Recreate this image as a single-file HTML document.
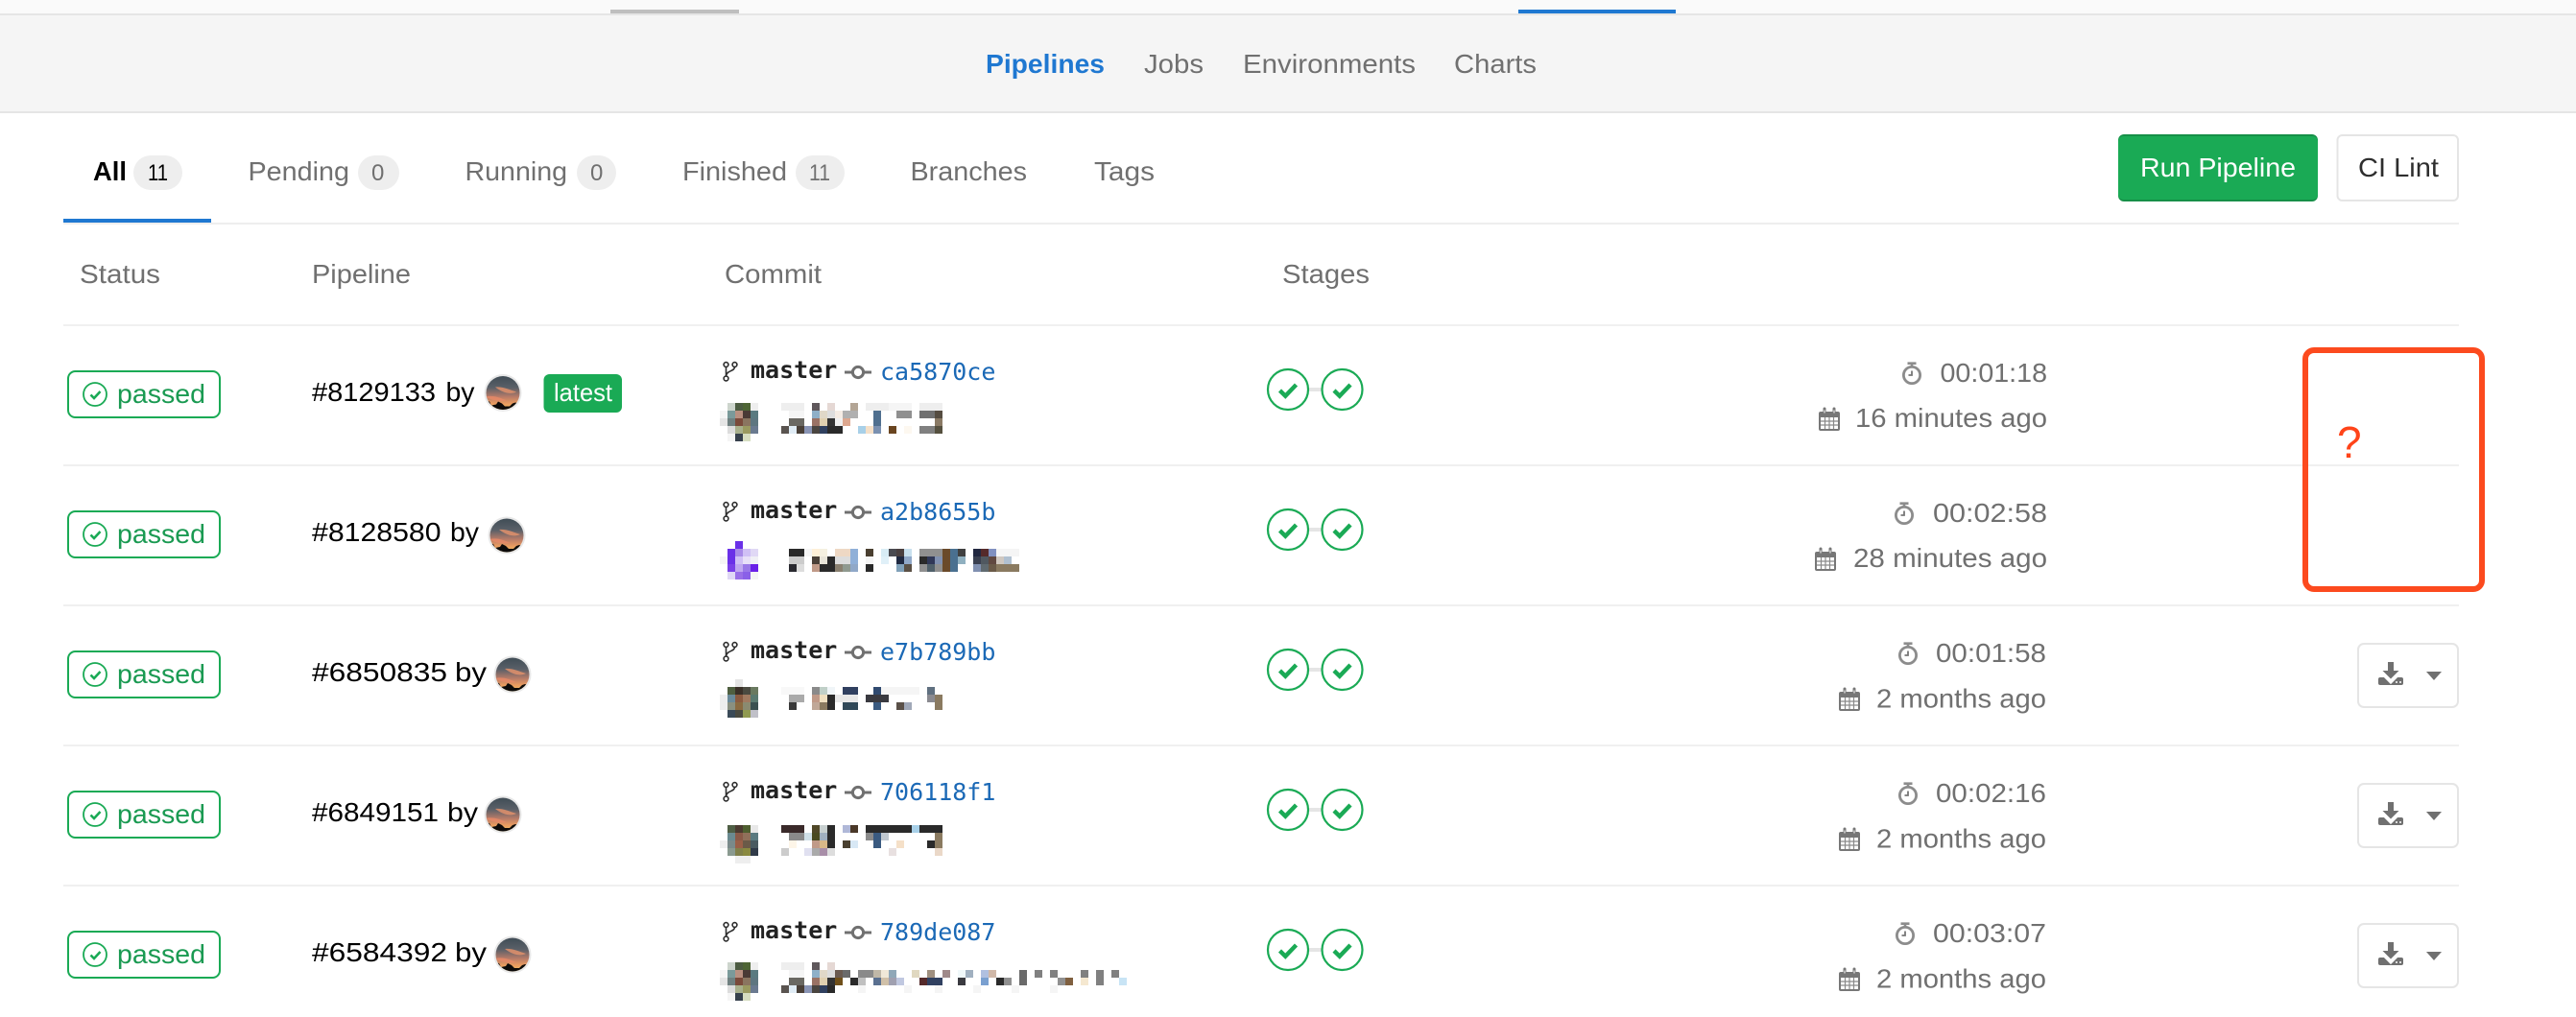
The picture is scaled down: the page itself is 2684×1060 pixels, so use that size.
<!DOCTYPE html>
<html>
<head>
<meta charset="utf-8">
<title>Pipelines</title>
<style>
html,body{margin:0;padding:0;background:#fff;width:2684px;height:1060px;overflow:hidden}
svg{display:block}
text{font-family:"Liberation Sans",Arial,sans-serif;font-size:28px;fill:#707070}
.b{font-weight:bold}
.d{fill:#000}
.n{font-size:24px}
.mono{font-family:"DejaVu Sans Mono","Liberation Mono",monospace;font-size:25px}
.m{font-weight:bold;fill:#222}
.h{fill:#1b69b6}
.p{fill:#1a9a52}
.px{fill:none;stroke-width:1;shape-rendering:crispEdges}
</style>
</head>
<body>
<svg width="2684" height="1060" viewBox="0 0 2684 1060" xmlns="http://www.w3.org/2000/svg">
<defs>
  <linearGradient id="sky" x1="0" y1="0" x2="0" y2="1">
    <stop offset="0" stop-color="#3f4c55"/>
    <stop offset=".35" stop-color="#5a6068"/>
    <stop offset=".62" stop-color="#b97c68"/>
    <stop offset=".8" stop-color="#e89a60"/>
    <stop offset="1" stop-color="#f0c060"/>
  </linearGradient>
  <clipPath id="ac"><circle r="17.500"/></clipPath>
  <g id="av">
    <circle r="19.500" fill="#e8e8e8"/>
    <g clip-path="url(#ac)">
      <rect x="-18" y="-18" width="36" height="36" fill="url(#sky)"/>
      <path d="M-8-6C-1-7 8-3 14-1 8 2 0 0-8-6z" fill="#e0906c" opacity=".85"/>
      <path d="M-18 4C-10 2-3 5 4 8-4 9-12 8-18 4z" fill="#e88a68" opacity=".8"/>
      <path d="M-18 8l4 1 2 4 5-1 2-3 4 2 3 3 5 0 3-3 3-1 3 1 4 2V20H-18z" fill="#0d0b0a"/>
    </g>
  </g>
  <g id="ck">
    <circle r="21" fill="#fff" stroke="#1aaa55" stroke-width="2.200"/>
    <path d="M-8.500 1L-2.700 6.700 8.500-5" fill="none" stroke="#1aaa55" stroke-width="4.400"/>
  </g>
  <g id="stg">
    <rect x="0" y="-2" width="60" height="4" fill="#e5e5e5"/>
    <use href="#ck" x="0" y="0"/>
    <use href="#ck" x="56.500" y="0"/>
  </g>
  <g id="pass">
    <rect x="71" y="387" width="158" height="48" rx="7.500" fill="#fff" stroke="#1aaa55" stroke-width="2"/>
    <circle cx="99" cy="411" r="12" fill="none" stroke="#1aaa55" stroke-width="1.800"/>
    <path d="M94.500 411.500L98 415 104.500 408" fill="none" stroke="#1aaa55" stroke-width="2.600"/>
    <text class="p" x="122" y="420" textLength="92" lengthAdjust="spacingAndGlyphs">passed</text>
  </g>
  <g id="br" fill="none" stroke="#2e2e2e" stroke-width="1.600">
    <circle cx="756.500" cy="380" r="2.400"/><circle cx="765.500" cy="380" r="2.400"/><circle cx="756.500" cy="394.500" r="2.400"/>
    <path d="M756.500 382.500V392M765.500 382.500C765.500 387 757.500 386 756.500 391.500"/>
  </g>
  <g id="cm" fill="none" stroke="#707070" stroke-width="3">
    <path d="M880 388h8M900 388h8"/><circle cx="894" cy="388" r="5.600"/>
  </g>
  <g id="sw" fill="none" stroke="#8c8c8c">
    <circle r="8.600" stroke-width="2.800"/>
    <path d="M-4.500-12.300h9M0-11.500v3" stroke-width="2.600"/>
    <path d="M0-4.500v4.500h-3.500" stroke-width="1.800" stroke="#777"/>
  </g>
  <g id="cal">
    <rect x="0" y="4" width="22" height="20" rx="2" fill="#777"/>
    <rect x="2" y="10" width="18" height="12" fill="#fff"/>
    <path d="M6.500 10v12M11 10v12M15.500 10v12M2 14h18M2 18h18" stroke="#8a8a8a" stroke-width="1.200"/>
    <path d="M6 1v6M16 1v6" stroke="#777" stroke-width="3" stroke-linecap="round"/>
    <path d="M6 2.500v3M16 2.500v3" stroke="#fff" stroke-width="1"/>
  </g>
  <g id="dl">
    <rect x="2457" y="671" width="104" height="66" rx="6" fill="#fff" stroke="#e5e5e5" stroke-width="2"/>
    <rect x="2478" y="706" width="26" height="8" rx="2" fill="#707070"/>
    <path d="M2482 702L2491 711 2500 702z" fill="#fff" stroke="#fff" stroke-width="3"/>
    <path d="M2488 690h6v9h5.500L2491 707.500 2482.500 699h5.500z" fill="#707070"/>
    <circle cx="2497" cy="711" r="1" fill="#fff"/><circle cx="2501" cy="711" r="1" fill="#fff"/>
    <path d="M2528 700h16l-8 9z" fill="#707070"/>
  </g>
  <g id="a1" class="px">
    <path stroke="#cdd5cd" d="M1 .5h1"/><path stroke="#4c5c42" d="M2 .5h1"/><path stroke="#4e6535" d="M3 .5h1"/><path stroke="#eeeeee" d="M4 .5h1"/>
    <path stroke="#f5f5f5" d="M0 1.500h1"/><path stroke="#7a9a9a" d="M1 1.500h1"/><path stroke="#b99080" d="M2 1.500h1"/><path stroke="#4a3a35" d="M3 1.500h1"/><path stroke="#5a7a80" d="M4 1.500h1"/>
    <path stroke="#e5e5e5" d="M0 2.500h1"/><path stroke="#6f8080" d="M1 2.500h1"/><path stroke="#7a4a3a" d="M2 2.500h1"/><path stroke="#8a7560" d="M3 2.500h1"/><path stroke="#5e7680" d="M4 2.500h1"/>
    <path stroke="#dcdcdc" d="M1 3.500h1"/><path stroke="#a8b08c" d="M2 3.500h1"/><path stroke="#9a9a60" d="M3 3.500h1"/><path stroke="#6a7a90" d="M4 3.500h1"/>
    <path stroke="#f5f5f5" d="M1 4.500h1"/><path stroke="#36404c" d="M2 4.500h1"/><path stroke="#d6ddc0" d="M3 4.500h1"/>
  </g>
</defs>

<!-- top -->
<rect x="0" y="0" width="2684" height="14" fill="#fafafa"/>
<rect x="636" y="10" width="134" height="4" fill="#bfbfbf"/>
<rect x="1582" y="10" width="164" height="4" fill="#1f78d1"/>
<rect x="0" y="14" width="2684" height="2" fill="#e5e5e5"/>
<rect x="0" y="16" width="2684" height="100" fill="#f5f5f5"/>
<rect x="0" y="116" width="2684" height="2" fill="#e5e5e5"/>
<text class="b" style="fill:#1f78d1" x="1027" y="76" textLength="124" lengthAdjust="spacingAndGlyphs">Pipelines</text>
<text x="1192" y="76" textLength="62" lengthAdjust="spacingAndGlyphs">Jobs</text>
<text x="1295" y="76" textLength="180" lengthAdjust="spacingAndGlyphs">Environments</text>
<text x="1515" y="76" textLength="86" lengthAdjust="spacingAndGlyphs">Charts</text>

<!-- tabs -->
<rect x="66" y="232" width="2496" height="2" fill="#eeeeee"/>
<rect x="66" y="228" width="154" height="4" fill="#1f78d1"/>
<text class="b d" x="97" y="188" textLength="35" lengthAdjust="spacingAndGlyphs">All</text>
<rect x="139" y="162" width="51" height="36" rx="18" fill="#eeeeee"/>
<text class="n d" x="154" y="188" textLength="21" lengthAdjust="spacingAndGlyphs">11</text>
<text x="258.500" y="188" textLength="105.500" lengthAdjust="spacingAndGlyphs">Pending</text>
<rect x="373" y="162" width="43" height="36" rx="18" fill="#eeeeee"/>
<text class="n" x="387" y="188">0</text>
<text x="484.500" y="188" textLength="106.500" lengthAdjust="spacingAndGlyphs">Running</text>
<rect x="601" y="162" width="41" height="36" rx="18" fill="#eeeeee"/>
<text class="n" x="615" y="188">0</text>
<text x="711" y="188" textLength="109" lengthAdjust="spacingAndGlyphs">Finished</text>
<rect x="829" y="162" width="51" height="36" rx="18" fill="#eeeeee"/>
<text class="n" x="843" y="188" textLength="22" lengthAdjust="spacingAndGlyphs">11</text>
<text x="948.500" y="188" textLength="121.500" lengthAdjust="spacingAndGlyphs">Branches</text>
<text x="1140" y="188" textLength="63" lengthAdjust="spacingAndGlyphs">Tags</text>

<!-- buttons -->
<rect x="2207" y="140" width="208" height="70" rx="6" fill="#168f48"/>
<rect x="2207" y="142" width="208" height="66" rx="5" fill="#1aaa55"/>
<text style="fill:#fff" x="2230" y="184" textLength="162" lengthAdjust="spacingAndGlyphs">Run Pipeline</text>
<rect x="2435.500" y="141" width="125.500" height="68" rx="5" fill="#fff" stroke="#e5e5e5" stroke-width="2"/>
<text style="fill:#2e2e2e" x="2457" y="184" textLength="84" lengthAdjust="spacingAndGlyphs">CI Lint</text>

<!-- table head -->
<text x="83" y="295" textLength="84" lengthAdjust="spacingAndGlyphs">Status</text>
<text x="325" y="295" textLength="103" lengthAdjust="spacingAndGlyphs">Pipeline</text>
<text x="755" y="295" textLength="101" lengthAdjust="spacingAndGlyphs">Commit</text>
<text x="1336" y="295" textLength="91" lengthAdjust="spacingAndGlyphs">Stages</text>
<rect x="66" y="338" width="2496" height="2" fill="#f0f0f0"/>
<rect x="66" y="484" width="2496" height="2" fill="#f0f0f0"/>
<rect x="66" y="630" width="2496" height="2" fill="#f0f0f0"/>
<rect x="66" y="776" width="2496" height="2" fill="#f0f0f0"/>
<rect x="66" y="922" width="2496" height="2" fill="#f0f0f0"/>

<!-- ROW 1 -->
<use href="#pass"/>
<text class="d" x="325" y="418" textLength="129" lengthAdjust="spacingAndGlyphs">#8129133</text>
<text class="d" x="464.500" y="418" textLength="30" lengthAdjust="spacingAndGlyphs">by</text>
<use href="#av" x="524" y="409.500"/>
<rect x="566.500" y="390" width="81.500" height="40" rx="6" fill="#1aaa55"/>
<text style="fill:#fff;font-size:26px" x="577" y="418" textLength="61" lengthAdjust="spacingAndGlyphs">latest</text>
<use href="#br"/>
<text class="mono m" x="782" y="394">master</text>
<use href="#cm"/>
<text class="mono h" x="917" y="396">ca5870ce</text>
<use href="#stg" x="1342" y="406"/>
<use href="#sw" x="1992" y="391"/>
<text x="2021.500" y="398" textLength="111.500" lengthAdjust="spacingAndGlyphs">00:01:18</text>
<use href="#cal" x="1895" y="425"/>
<text x="1933" y="445" textLength="200" lengthAdjust="spacingAndGlyphs">16 minutes ago</text>
<use href="#a1" transform="translate(750,420) scale(8)"/>
<g class="px" transform="translate(814,420) scale(8)">
<path stroke="#eeeeee" d="M0 .5h3M11 .5h3M18 .5h3"/><path stroke="#5f585c" d="M4 .5h1"/><path stroke="#e5d8d4" d="M6 .5h1"/><path stroke="#b3a595" d="M9 .5h1"/><path stroke="#f5f5f5" d="M14 .5h3"/>
<path stroke="#f5f5f5" d="M1 1.500h2"/><path stroke="#8fb0c8" d="M4 1.500h1"/><path stroke="#e0d8c8" d="M5 1.500h1"/><path stroke="#dddddd" d="M6 1.500h1"/><path stroke="#f5ece4" d="M7 1.500h1"/><path stroke="#b0b0b0" d="M8 1.500h2"/><path stroke="#4f6f8f" d="M12 1.500h1"/><path stroke="#909090" d="M15 1.500h2"/><path stroke="#707070" d="M18 1.500h2"/><path stroke="#554c40" d="M20 1.500h1"/>
<path stroke="#6a6862" d="M1 2.500h2"/><path stroke="#9a7265" d="M4 2.500h1"/><path stroke="#e0d0b0" d="M5 2.500h1"/><path stroke="#333333" d="M6 2.500h1"/><path stroke="#f0f0f0" d="M7 2.500h1"/><path stroke="#dda890" d="M8 2.500h1"/><path stroke="#4f6f8f" d="M12 2.500h1"/><path stroke="#8a7a65" d="M20 2.500h1"/>
<path stroke="#5a5450" d="M0 3.500h1"/><path stroke="#e0ecf5" d="M1 3.500h1"/><path stroke="#4a4038" d="M2 3.500h1"/><path stroke="#8a95b5" d="M3 3.500h1"/><path stroke="#4a4540" d="M4 3.500h1"/><path stroke="#30405f" d="M5 3.500h1"/><path stroke="#2a2a2a" d="M6 3.500h2"/><path stroke="#a8d0e8" d="M10 3.500h1"/><path stroke="#f5e0c8" d="M11 3.500h1"/><path stroke="#7a90b0" d="M12 3.500h1"/><path stroke="#6a4520" d="M14 3.500h1"/><path stroke="#fdf8f0" d="M16 3.500h1"/><path stroke="#808080" d="M18 3.500h2"/><path stroke="#55503f" d="M20 3.500h1"/>
</g>

<!-- ROW 2 -->
<use href="#pass" y="146"/>
<text class="d" x="325" y="564" textLength="134.500" lengthAdjust="spacingAndGlyphs">#8128580</text>
<text class="d" x="469" y="564" textLength="30" lengthAdjust="spacingAndGlyphs">by</text>
<use href="#av" x="528" y="558"/>
<use href="#br" y="146"/>
<text class="mono m" x="782" y="540">master</text>
<use href="#cm" y="146"/>
<text class="mono h" x="917" y="542">a2b8655b</text>
<use href="#stg" x="1342" y="552"/>
<use href="#sw" x="1984" y="537"/>
<text x="2014" y="544" textLength="119" lengthAdjust="spacingAndGlyphs">00:02:58</text>
<use href="#cal" x="1891" y="571"/>
<text x="1931" y="591" textLength="202" lengthAdjust="spacingAndGlyphs">28 minutes ago</text>
<g class="px" transform="translate(750,564) scale(8)">
<path stroke="#6a30e8" d="M2 .5h1M1 1.500h1M1 2.500h1"/><path stroke="#a88ae8" d="M2 1.500h1"/><path stroke="#d0c0f5" d="M3 1.500h1M2 2.500h1"/><path stroke="#e0d8f5" d="M4 1.500h1M1 4.500h1"/>
<path stroke="#f5f5f5" d="M0 2.500h1M4 4.500h1"/><path stroke="#e8e0f8" d="M3 2.500h1"/><path stroke="#f0f0f5" d="M4 2.500h1"/>
<path stroke="#7a40e8" d="M1 3.500h1"/><path stroke="#c0a8f0" d="M2 3.500h1"/><path stroke="#9a78e8" d="M3 3.500h1"/><path stroke="#6a20e8" d="M4 3.500h1"/>
<path stroke="#9a70e8" d="M2 4.500h1"/><path stroke="#8a60e8" d="M3 4.500h1"/>
</g>
<g class="px" transform="translate(814,572) scale(8)">
<path stroke="#2a2a2a" d="M1 .5h2M6 1.500h1M18 1.500h1M5 2.500h2M11 2.500h1"/><path stroke="#f5f5f5" d="M3 .5h1M11 1.500h1M28 .5h3"/><path stroke="#fef0d8" d="M4 .5h1"/><path stroke="#f5f0e0" d="M5 .5h1"/><path stroke="#eed8c4" d="M7 .5h2"/><path stroke="#90b0d8" d="M9 .5h1M9 1.500h1"/><path stroke="#4a3f30" d="M11 .5h1"/><path stroke="#d8ecf5" d="M13 .5h1"/><path stroke="#4a4a50" d="M14 .5h1"/><path stroke="#4a4040" d="M15 .5h1"/><path stroke="#c8e0ee" d="M16 .5h1"/><path stroke="#909090" d="M18 .5h3M18 2.500h1M20 2.500h1"/><path stroke="#6a4a2a" d="M21 .5h1M21 1.500h1M21 2.500h1"/><path stroke="#4a7090" d="M22 .5h1M22 1.500h1M22 2.500h1"/><path stroke="#404040" d="M23 .5h1"/><path stroke="#222840" d="M25 .5h1"/><path stroke="#552a2a" d="M26 .5h1"/><path stroke="#8090c0" d="M27 .5h1"/>
<path stroke="#cccccc" d="M1 1.500h2"/><path stroke="#4a4038" d="M4 1.500h1"/><path stroke="#e8e4d8" d="M5 1.500h1"/><path stroke="#dddddd" d="M7 1.500h2M2 2.500h1"/><path stroke="#e0f0f8" d="M13 1.500h1"/><path stroke="#1f2840" d="M15 1.500h1"/><path stroke="#90a8c8" d="M16 1.500h1M9 2.500h1"/><path stroke="#303858" d="M19 1.500h1"/><path stroke="#8090b0" d="M20 1.500h1M25 2.500h1"/><path stroke="#90b0c0" d="M23 1.500h1"/><path stroke="#3a4050" d="M25 1.500h1"/><path stroke="#505860" d="M26 1.500h1"/><path stroke="#604840" d="M27 1.500h1"/><path stroke="#d0c8c0" d="M28 1.500h1"/><path stroke="#b0c0d0" d="M29 1.500h1"/>
<path stroke="#2a2a30" d="M1 2.500h1"/><path stroke="#c09a88" d="M4 2.500h1"/><path stroke="#8a8070" d="M7 2.500h1"/><path stroke="#909a90" d="M8 2.500h1"/><path stroke="#80a0b8" d="M15 2.500h1"/><path stroke="#5a5045" d="M16 2.500h1"/><path stroke="#50606a" d="M19 2.500h1"/><path stroke="#606a70" d="M26 2.500h1"/><path stroke="#6a5a48" d="M27 2.500h1"/><path stroke="#8a7a60" d="M28 2.500h3"/>
</g>

<!-- ROW 3 -->
<use href="#pass" y="292"/>
<text class="d" x="325" y="710" textLength="141" lengthAdjust="spacingAndGlyphs">#6850835</text>
<text class="d" x="474" y="710" textLength="33" lengthAdjust="spacingAndGlyphs">by</text>
<use href="#av" x="534" y="703"/>
<use href="#br" y="292"/>
<text class="mono m" x="782" y="686">master</text>
<use href="#cm" y="292"/>
<text class="mono h" x="917" y="688">e7b789bb</text>
<use href="#stg" x="1342" y="698"/>
<use href="#sw" x="1988" y="683"/>
<text x="2017" y="690" textLength="115" lengthAdjust="spacingAndGlyphs">00:01:58</text>
<use href="#cal" x="1916" y="717"/>
<text x="1955" y="737.500" textLength="177" lengthAdjust="spacingAndGlyphs">2 months ago</text>
<use href="#dl"/>
<g class="px" transform="translate(750,708) scale(8)">
<path stroke="#e5e5e5" d="M2 .5h1"/><path stroke="#4f5f40" d="M1 1.500h1"/><path stroke="#3a3028" d="M2 1.500h1"/><path stroke="#4a4a40" d="M3 1.500h1"/><path stroke="#6a7a60" d="M4 1.500h1"/>
<path stroke="#eeeeee" d="M0 2.500h1M0 3.500h1"/><path stroke="#6a8a9a" d="M1 2.500h1"/><path stroke="#8a5a40" d="M2 2.500h1"/><path stroke="#a07a60" d="M3 2.500h1"/><path stroke="#5a7a70" d="M4 2.500h1"/>
<path stroke="#8a9080" d="M1 3.500h1"/><path stroke="#8a6a40" d="M2 3.500h1"/><path stroke="#8a8a70" d="M3 3.500h1"/><path stroke="#3a5050" d="M4 3.500h1"/>
<path stroke="#3a4a58" d="M1 4.500h1"/><path stroke="#4a4a40" d="M2 4.500h1"/><path stroke="#909a50" d="M3 4.500h1"/><path stroke="#c0c0c8" d="M4 4.500h1"/>
</g>
<g class="px" transform="translate(814,716) scale(8)">
<path stroke="#f8f8f8" d="M0 .5h3"/><path stroke="#8a8a8a" d="M4 .5h1"/><path stroke="#c0d0c8" d="M5 .5h1"/><path stroke="#f0f5f8" d="M6 .5h1"/><path stroke="#304060" d="M8 .5h2"/><path stroke="#304a70" d="M12 .5h1"/><path stroke="#f5f5f5" d="M13 .5h5"/><path stroke="#607080" d="M19 .5h1"/>
<path stroke="#aaaaaa" d="M1 1.500h2"/><path stroke="#c09a88" d="M4 1.500h1"/><path stroke="#f0e0c0" d="M5 1.500h1"/><path stroke="#2a2a2a" d="M6 1.500h1M6 2.500h1"/><path stroke="#e8e8e8" d="M7 1.500h3"/><path stroke="#3a3a40" d="M11 1.500h3"/><path stroke="#8a8a90" d="M19 1.500h1"/><path stroke="#8a7a60" d="M20 1.500h1M5 2.500h1M20 2.500h1"/>
<path stroke="#3a3a3a" d="M1 2.500h1"/><path stroke="#c0a898" d="M4 2.500h1"/><path stroke="#304858" d="M8 2.500h2"/><path stroke="#3a5a80" d="M12 2.500h1"/><path stroke="#5a5048" d="M15 2.500h1"/><path stroke="#a0a8b8" d="M16 2.500h1"/>
</g>

<!-- ROW 4 -->
<use href="#pass" y="438"/>
<text class="d" x="325" y="856" textLength="132" lengthAdjust="spacingAndGlyphs">#6849151</text>
<text class="d" x="466" y="856" textLength="32" lengthAdjust="spacingAndGlyphs">by</text>
<use href="#av" x="524" y="849"/>
<use href="#br" y="438"/>
<text class="mono m" x="782" y="832">master</text>
<use href="#cm" y="438"/>
<text class="mono h" x="917" y="834">706118f1</text>
<use href="#stg" x="1342" y="844"/>
<use href="#sw" x="1988" y="829"/>
<text x="2017" y="836" textLength="115" lengthAdjust="spacingAndGlyphs">00:02:16</text>
<use href="#cal" x="1916" y="863"/>
<text x="1955" y="883.500" textLength="177" lengthAdjust="spacingAndGlyphs">2 months ago</text>
<use href="#dl" y="146"/>
<g class="px" transform="translate(750,860) scale(8)">
<path stroke="#4f5f45" d="M1 .5h1"/><path stroke="#4a3a30" d="M2 .5h1"/><path stroke="#4f5f30" d="M3 .5h1"/><path stroke="#e8e8e8" d="M4 .5h1"/>
<path stroke="#6a8a90" d="M1 1.500h1"/><path stroke="#8a5a48" d="M2 1.500h1"/><path stroke="#90705a" d="M3 1.500h1"/><path stroke="#5a7a80" d="M4 1.500h1"/>
<path stroke="#eeeeee" d="M0 2.500h1M2 4.500h2"/><path stroke="#7a8a8a" d="M1 2.500h1"/><path stroke="#9a6048" d="M2 2.500h1"/><path stroke="#6a5a48" d="M3 2.500h1"/><path stroke="#4a5a60" d="M4 2.500h1"/>
<path stroke="#8a9a90" d="M1 3.500h1"/><path stroke="#80804a" d="M2 3.500h1"/><path stroke="#8a8a40" d="M3 3.500h1"/><path stroke="#303a48" d="M4 3.500h1"/>
</g>
<g class="px" transform="translate(814,860) scale(8)">
<path stroke="#3a2a2a" d="M0 .5h3"/><path stroke="#504828" d="M4 .5h1"/><path stroke="#c8d0d0" d="M5 .5h1"/><path stroke="#2a2a2a" d="M6 .5h1M11 .5h6M18 .5h3M6 1.500h1M6 2.500h1M19 2.500h1"/><path stroke="#b0b8d8" d="M8 .5h1"/><path stroke="#4a3828" d="M9 .5h1"/><path stroke="#a8d0e8" d="M17 .5h1"/>
<path stroke="#8a8a8a" d="M1 1.500h2M11 1.500h1"/><path stroke="#d0e0e8" d="M3 1.500h1"/><path stroke="#4a4a20" d="M4 1.500h1"/><path stroke="#a0b0c0" d="M5 1.500h1"/><path stroke="#3a5a80" d="M12 1.500h1M12 2.500h1"/><path stroke="#c0c8d0" d="M13 1.500h1"/><path stroke="#8a7a60" d="M20 1.500h1M20 2.500h1"/>
<path stroke="#fdf5e8" d="M1 2.500h1"/><path stroke="#c09a88" d="M4 2.500h1"/><path stroke="#d8b888" d="M5 2.500h1"/><path stroke="#4a4030" d="M8 2.500h1"/><path stroke="#d8e8f5" d="M9 2.500h1"/><path stroke="#f5e0c8" d="M15 2.500h1"/>
<path stroke="#cccccc" d="M0 3.500h1"/><path stroke="#e0e0f0" d="M3 3.500h1"/><path stroke="#aaaaaa" d="M4 3.500h1"/><path stroke="#a88ea8" d="M5 3.500h1"/><path stroke="#dddddd" d="M6 3.500h1"/><path stroke="#e8e0e0" d="M14 3.500h1"/><path stroke="#ead8c8" d="M20 3.500h1"/>
</g>

<!-- ROW 5 -->
<use href="#pass" y="584"/>
<text class="d" x="325" y="1002" textLength="141" lengthAdjust="spacingAndGlyphs">#6584392</text>
<text class="d" x="474" y="1002" textLength="33" lengthAdjust="spacingAndGlyphs">by</text>
<use href="#av" x="534" y="995"/>
<use href="#br" y="584"/>
<text class="mono m" x="782" y="978">master</text>
<use href="#cm" y="584"/>
<text class="mono h" x="917" y="980">789de087</text>
<use href="#stg" x="1342" y="990"/>
<use href="#sw" x="1985" y="975"/>
<text x="2014" y="982" textLength="118" lengthAdjust="spacingAndGlyphs">00:03:07</text>
<use href="#cal" x="1916" y="1009"/>
<text x="1955" y="1029.500" textLength="177" lengthAdjust="spacingAndGlyphs">2 months ago</text>
<use href="#dl" y="292"/>
<use href="#a1" transform="translate(750,1003) scale(8)"/>
<g class="px" transform="translate(814,1003) scale(8)">
<path stroke="#eeeeee" d="M0 .5h3"/><path stroke="#5f585c" d="M4 .5h1"/><path stroke="#e5d8d4" d="M6 .5h1"/>
<path stroke="#f5f5f5" d="M1 1.500h2M10 3.500h1M16 3.500h1M20 3.500h1M25 3.500h1M30 3.500h1M35 3.500h1"/><path stroke="#8fb0c8" d="M4 1.500h1"/><path stroke="#e0d8c8" d="M5 1.500h1"/><path stroke="#dddddd" d="M6 1.500h1"/><path stroke="#6a5a50" d="M7 1.500h1"/><path stroke="#6a6a6a" d="M8 1.500h1M31 1.500h1M31 2.500h1"/><path stroke="#8a8a8a" d="M10 1.500h2"/><path stroke="#c0b8a8" d="M12 1.500h1"/><path stroke="#f0e8d8" d="M13 1.500h1"/><path stroke="#90a8b8" d="M14 1.500h1"/><path stroke="#e0d8c0" d="M17 1.500h1"/><path stroke="#a09080" d="M19 1.500h1"/><path stroke="#a08a8a" d="M21 1.500h1"/><path stroke="#f0f8fa" d="M23 1.500h1"/><path stroke="#a0b0c0" d="M24 1.500h1"/><path stroke="#b0c0e0" d="M26 1.500h1"/><path stroke="#d0b8a8" d="M27 1.500h1"/><path stroke="#808080" d="M33 1.500h1M35 1.500h1M39 1.500h1M41 1.500h1M43 1.500h1M41 2.500h1"/>
<path stroke="#6a6862" d="M1 2.500h2"/><path stroke="#9a7265" d="M4 2.500h1"/><path stroke="#e0d0b0" d="M5 2.500h1"/><path stroke="#333333" d="M6 2.500h1"/><path stroke="#70501a" d="M7 2.500h1"/><path stroke="#2a2a2a" d="M9 2.500h1M28 2.500h1M6 3.500h1"/><path stroke="#c0c0c0" d="M10 2.500h1"/><path stroke="#5a7090" d="M12 2.500h1"/><path stroke="#d0c0a8" d="M13 2.500h1"/><path stroke="#a0a0b0" d="M14 2.500h1"/><path stroke="#c0c8e0" d="M15 2.500h1"/><path stroke="#552a2a" d="M18 2.500h1"/><path stroke="#304060" d="M19 2.500h2"/><path stroke="#3a3a40" d="M23 2.500h1"/><path stroke="#7aa0d0" d="M26 2.500h1"/><path stroke="#909090" d="M29 2.500h1M36 2.500h1"/><path stroke="#806040" d="M37 2.500h1"/><path stroke="#f5e8d0" d="M39 2.500h1"/><path stroke="#c8e4f5" d="M44 2.500h1"/>
<path stroke="#5a5450" d="M0 3.500h1"/><path stroke="#e0ecf5" d="M1 3.500h1"/><path stroke="#4a4038" d="M2 3.500h1"/><path stroke="#8a95b5" d="M3 3.500h1"/><path stroke="#4a4540" d="M4 3.500h1"/><path stroke="#30405f" d="M5 3.500h1"/>
</g>

<!-- red annotation -->
<rect x="2402" y="365" width="184" height="249" rx="9" fill="none" stroke="#fc4a1e" stroke-width="6"/>
<text style="fill:#ff4419;font-size:46px" x="2435" y="477">?</text>
</svg>
</body>
</html>
